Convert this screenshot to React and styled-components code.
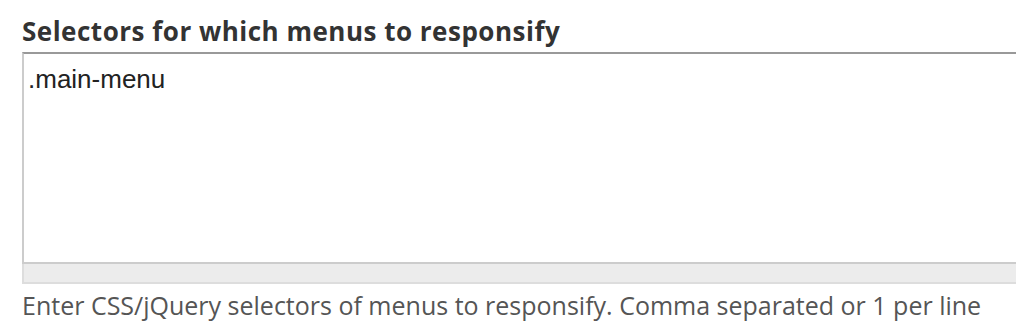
import React from 'react';
import styled, { createGlobalStyle } from 'styled-components';

const GlobalStyle = createGlobalStyle`
  html, body {
    margin: 0;
    padding: 0;
    background: #fff;
    overflow: hidden;
  }
`;

const Page = styled.div`
  width: 1016px;
  height: 336px;
  overflow: hidden;
  padding: 16px 0 0 22px;
  box-sizing: border-box;
`;

const Label = styled.label`
  display: block;
  font-family: "Open Sans", sans-serif;
  font-weight: 700;
  font-size: 26px;
  letter-spacing: 0.5px;
  line-height: 30px;
  color: #333;
  margin-bottom: 6px;
`;

const Field = styled.div`
  width: 1040px;
  display: flex;
  flex-direction: column;
`;

const TextArea = styled.textarea`
  display: block;
  box-sizing: border-box;
  width: 100%;
  height: 212px;
  margin: 0;
  padding: 9px 4px 6px;
  border: 2px solid #ccc;
  border-top-color: #999;
  border-radius: 0;
  resize: none;
  outline: none;
  font-family: "Liberation Sans", Arial, sans-serif;
  font-size: 26px;
  line-height: 32px;
  color: #222;
  background: #fff;
`;

const Grip = styled.div`
  height: 18px;
  background: #ececec;
  border: 2px solid #ddd;
  border-top: none;
`;

const Description = styled.div`
  font-family: "Open Sans", sans-serif;
  font-size: 25px;
  line-height: 30px;
  color: #555;
  margin-top: 6px;
`;

export default function App() {
  return (
    <>
      <GlobalStyle />
      <Page>
        <Label htmlFor="menus">Selectors for which menus to responsify</Label>
        <Field>
          <TextArea id="menus" defaultValue=".main-menu" />
          <Grip />
        </Field>
        <Description>
          Enter CSS/jQuery selectors of menus to responsify. Comma separated or 1 per line
        </Description>
      </Page>
    </>
  );
}
